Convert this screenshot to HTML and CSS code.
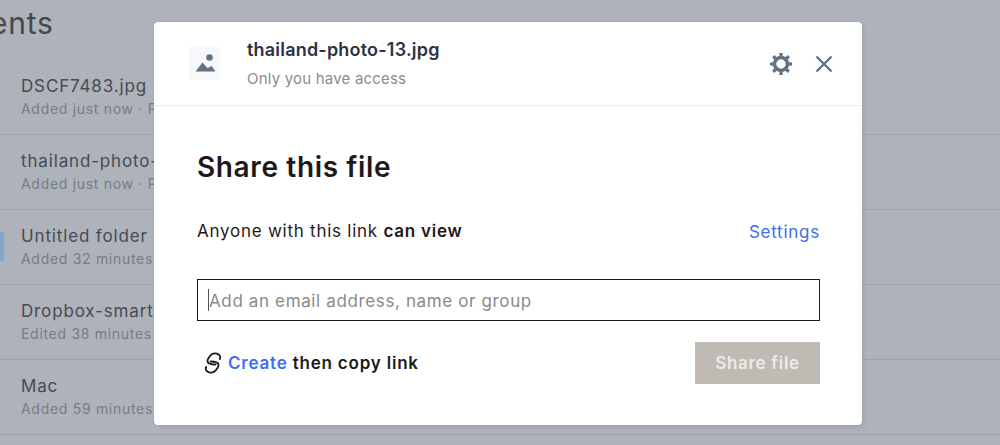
FILE: index.html
```html
<!DOCTYPE html>
<html lang="en">
<head>
  <meta charset="UTF-8" />
  <title>Share this file</title>
  <link rel="stylesheet" href="styles.css">
</head>
<body>
  <main class="page">
    <h1 class="page-title">Recents</h1>
    <ul class="file-list">
      <li class="file-row">
        <div class="file-name">DSCF7483.jpg</div>
        <div class="file-meta">Added just now · Private</div>
      </li>
      <li class="file-row">
        <div class="file-name">thailand-photo-13.jpg</div>
        <div class="file-meta">Added just now · Private</div>
      </li>
      <li class="file-row">
        <span class="folder-edge"></span>
        <div class="file-name">Untitled folder</div>
        <div class="file-meta">Added 32 minutes ago</div>
      </li>
      <li class="file-row">
        <div class="file-name">Dropbox-smart-sync.pdf</div>
        <div class="file-meta">Edited 38 minutes ago</div>
      </li>
      <li class="file-row">
        <div class="file-name">Mac</div>
        <div class="file-meta">Added 59 minutes ago</div>
      </li>
    </ul>
  </main>

  <section class="modal">
    <header class="modal-header">
      <div class="thumb">
        <svg width="24" height="24" viewBox="0 0 24 24">
          <circle cx="16.5" cy="5.5" r="3.3" fill="#637282"/>
          <path d="M2.5 19.5 L9.5 10.5 L14.5 16 L18.8 14 L22.5 19.5 Z" fill="#637282"/>
        </svg>
      </div>
      <div class="file-info">
        <div class="modal-file">thailand-photo-13.jpg</div>
        <div class="modal-access">Only you have access</div>
      </div>
      <button class="icon-btn gear" aria-label="Settings">
        <svg width="24" height="24" viewBox="0 0 24 24">
          <circle cx="12" cy="12" r="6.5" fill="none" stroke="#637282" stroke-width="3.6"/>
          <g stroke="#637282" stroke-width="3.2">
            <path d="M12 1V5"/><path d="M12 19V23"/>
            <path d="M1 12H5"/><path d="M19 12H23"/>
            <path d="M4.2 4.2L7 7"/><path d="M17 17L19.8 19.8"/>
            <path d="M4.2 19.8L7 17"/><path d="M17 7L19.8 4.2"/>
          </g>
        </svg>
      </button>
      <button class="icon-btn close" aria-label="Close">
        <svg width="18" height="18" viewBox="0 0 18 18">
          <path d="M1.5 1.5L16.5 16.5M16.5 1.5L1.5 16.5" stroke="#637282" stroke-width="2.4" fill="none"/>
        </svg>
      </button>
    </header>
    <div class="modal-body">
      <h2 class="modal-title">Share this file</h2>
      <div class="link-row">
        <span>Anyone with this link <strong>can view</strong></span>
        <a class="settings-link" href="#">Settings</a>
      </div>
      <div class="email-field">
        <span class="caret"></span>
        <input class="email-input" type="text" placeholder="Add an email address, name or group" />
      </div>
      <div class="actions">
        <div class="copy-link">
          <svg width="18" height="22" viewBox="0 0 18 22">
            <g fill="none" stroke="#1e1919" stroke-width="1.8" stroke-linecap="round">
              <path d="M11.5 12.5 C8 12.5 4 12 3.5 9.5 C3.2 8 4 6.6 5 5.2 C7 2.2 10 0.8 12.8 1.6 C16 2.6 16.8 5 15.8 7"/>
              <path d="M6.5 9.5 C10 9.5 14 10 14.5 12.5 C14.8 14 14 15.4 13 16.8 C11 19.8 8 21.2 5.2 20.4 C2 19.4 1.2 17 2.2 15"/>
            </g>
          </svg>
          <span><a class="create-link" href="#">Create</a> then copy link</span>
        </div>
        <button class="share-btn" disabled>Share file</button>
      </div>
    </div>
  </section>
</body>
</html>
```

FILE: styles.css
```css
* {
  margin: 0;
  padding: 0;
  box-sizing: border-box;
}

html, body {
  height: 445px;
  overflow: hidden;
}

body {
  font-family: 'Inter', 'Liberation Sans', sans-serif;
  background: #aeb2ba;
  color: #1e1919;
}

/* page behind the overlay */
.page-title {
  height: 60px;
  margin-left: -66px;
  padding-top: 3px;
  font-size: 30px;
  line-height: 40px;
  font-weight: 400;
  letter-spacing: 0.8px;
  color: #45484e;
  white-space: nowrap;
}

.file-list {
  list-style: none;
}

.file-row {
  position: relative;
  height: 75px;
  padding: 14px 0 0 21px;
  border-bottom: 1px solid #9da1a8;
  white-space: nowrap;
  overflow: hidden;
}

.file-name {
  font-size: 17px;
  line-height: 24px;
  letter-spacing: 0.85px;
  color: #484b52;
}

.file-meta {
  font-size: 14px;
  line-height: 22px;
  letter-spacing: 0.7px;
  color: #797c83;
}

.folder-edge {
  position: absolute;
  left: 0;
  top: 22px;
  width: 4px;
  height: 29px;
  background: #84a5cb;
  border-radius: 0 2px 2px 0;
}

/* modal */
.modal {
  position: absolute;
  left: 154px;
  top: 22px;
  width: 708px;
  height: 403px;
  background: #fff;
  border-radius: 4px;
  box-shadow: 0 0 0 1px rgba(100, 105, 115, 0.12), 4px 4px 0 rgba(100, 105, 115, 0.08);
}

.modal-header {
  display: flex;
  align-items: center;
  height: 84px;
  padding: 0 29px 0 35px;
  border-bottom: 1px solid #ececec;
}

.thumb {
  width: 31px;
  height: 33px;
  background: #f7f8fa;
  display: flex;
  align-items: center;
  justify-content: center;
  margin-right: 27px;
}

.file-info {
  flex: 1;
  padding-bottom: 1px;
}

.modal-file {
  font-size: 18px;
  line-height: 26px;
  font-weight: 600;
  letter-spacing: 0.2px;
  color: #2b3340;
}

.modal-access {
  margin-top: 5px;
  font-size: 15px;
  line-height: 22px;
  letter-spacing: 0.2px;
  color: #8c8c8c;
}

.icon-btn {
  display: flex;
  border: none;
  background: none;
}

.gear {
  margin-right: 22px;
}

.modal-body {
  padding: 43px 42px 0 43px;
}

.modal-title {
  font-size: 28px;
  line-height: 36px;
  font-weight: 600;
  letter-spacing: 0.63px;
  color: #1e1919;
}

.link-row {
  display: flex;
  justify-content: space-between;
  height: 26px;
  margin-top: 33px;
  font-size: 17px;
  line-height: 26px;
  letter-spacing: 0.75px;
}

.link-row strong {
  font-weight: 600;
}

.settings-link {
  margin-top: 1px;
  color: #3d6ff2;
  text-decoration: none;
}

.email-field {
  position: relative;
  display: flex;
  height: 42px;
  margin-top: 35px;
  border: 1px solid #1e1919;
}

.caret {
  position: absolute;
  left: 10px;
  top: 9px;
  width: 1px;
  height: 22px;
  background: #555;
}

.email-input {
  flex: 1;
  min-width: 0;
  border: none;
  outline: none;
  padding: 1px 0 0 11px;
  font-family: inherit;
  font-size: 17px;
  letter-spacing: 0.63px;
}

.email-input::placeholder {
  color: #8a8a8a;
  opacity: 1;
}

.actions {
  display: flex;
  justify-content: space-between;
  align-items: center;
  margin-top: 21px;
}

.copy-link {
  display: flex;
  align-items: center;
  gap: 6px;
  margin-left: 7px;
  font-size: 17px;
  font-weight: 600;
  letter-spacing: 0.8px;
}

.create-link {
  color: #3d6ff2;
  text-decoration: none;
}

.share-btn {
  width: 125px;
  height: 42px;
  border: none;
  background: #bfbab4;
  color: #ecebe9;
  font-family: inherit;
  font-size: 17px;
  font-weight: 600;
  letter-spacing: 0.7px;
}
```
